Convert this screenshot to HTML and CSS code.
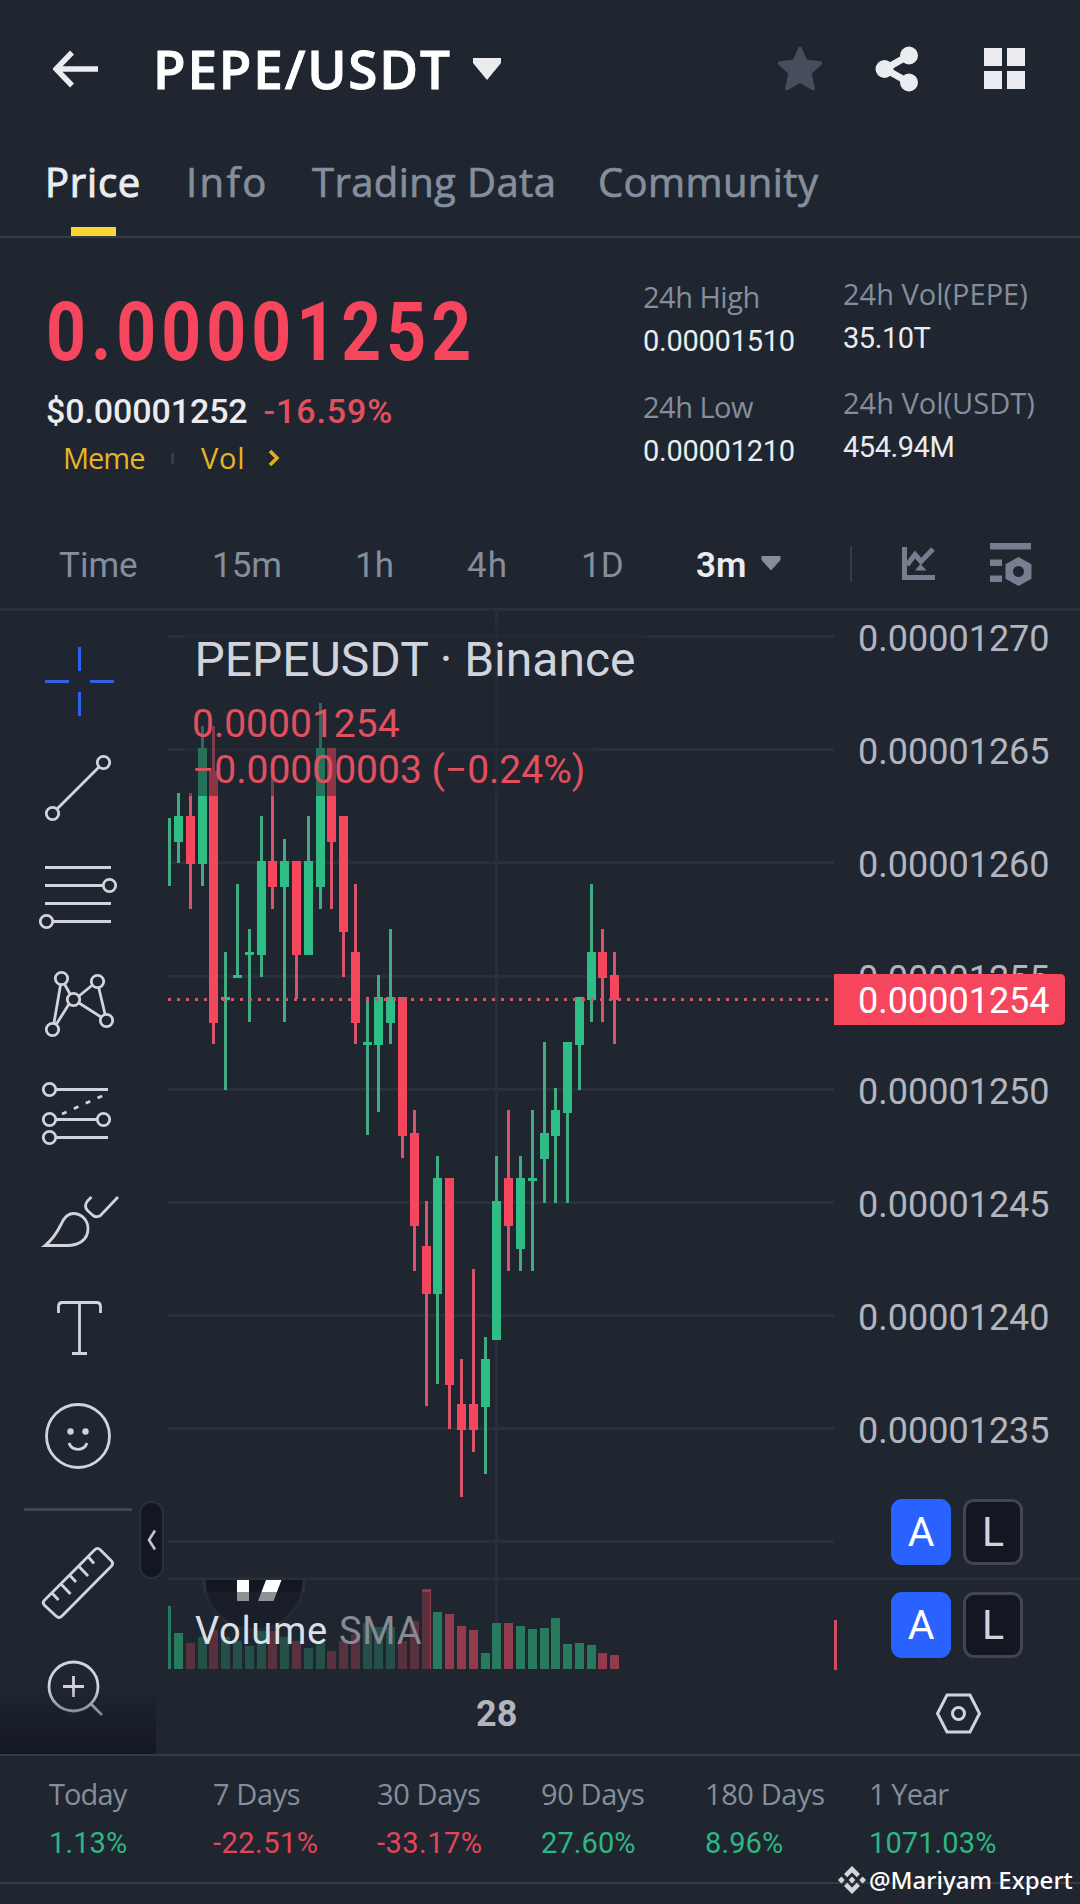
FILE: index.html
```html
<!DOCTYPE html>
<html lang="en">
<head>
<meta charset="utf-8">
<title>PEPE/USDT</title>
<link rel="stylesheet" href="styles.css">
</head>
<body>
<div class="app">
  <header class="header">
    <svg class="back" width="46" height="38" viewBox="0 0 46 38"><path d="M2 19H45M19 2.500 3 19l16 16.500" fill="none" stroke="#eaecef" stroke-width="5.500"/></svg>
    <h1 class="pair">PEPE/USDT</h1>
    <svg class="caret" width="28" height="22" viewBox="0 0 28 22"><path d="M0 0h28v5L14 22 0 5z" fill="#eaecef"/></svg>
    <div class="actions">
      <svg width="46" height="46" viewBox="0 0 46 46"><path d="M23 2.500l6 13 14.500 1.600-10.600 9.900 3.200 15.500L23 35.300 9.900 42.500l3.200-15.500L2.500 17.100 17 15.500z" fill="#474d5c" stroke="#474d5c" stroke-width="3.500" stroke-linejoin="round"/></svg>
      <svg class="share" width="44" height="46" viewBox="0 0 44 46"><path d="M33 10 10 23l23 13" fill="none" stroke="#eaecef" stroke-width="7"/><circle cx="34" cy="9.500" r="9" fill="#eaecef"/><circle cx="9.500" cy="23" r="9" fill="#eaecef"/><circle cx="34" cy="36.500" r="9" fill="#eaecef"/></svg>
      <svg class="grid-icon" width="41" height="41" viewBox="0 0 41 41"><path d="M0 0h18v18H0zM23 0h18v18H23zM0 23h18v18H0zM23 23h18v18H23z" fill="#eaecef"/></svg>
    </div>
  </header>

  <nav class="tabs">
    <a class="tab tab-active">Price</a>
    <a class="tab tab-info">Info</a>
    <a class="tab">Trading Data</a>
    <a class="tab">Community</a>
  </nav>

  <section class="summary">
    <div class="price-col">
      <div class="last-price">0.00001252</div>
      <div class="fiat"><span>$0.00001252</span><span class="fiat-change">-16.59%</span></div>
      <div class="tags">
        <span class="tag-meme">Meme</span><i class="tag-sep"></i><span class="tag-vol">Vol</span>
        <svg width="12" height="18" viewBox="0 0 12 18"><path d="M2 2l7 7-7 7" fill="none" stroke="#e0b01c" stroke-width="3.600"/></svg>
      </div>
    </div>
    <dl class="stats">
      <div><dt>24h High</dt><dd>0.00001510</dd></div>
      <div><dt>24h Low</dt><dd>0.00001210</dd></div>
    </dl>
    <dl class="stats stats-vol">
      <div><dt>24h Vol(PEPE)</dt><dd>35.10T</dd></div>
      <div><dt>24h Vol(USDT)</dt><dd>454.94M</dd></div>
    </dl>
  </section>

  <nav class="frames">
    <span>Time</span><span>15m</span><span>1h</span><span class="frame-4h">4h</span><span>1D</span>
    <span class="frame-on">3m<svg width="20" height="15" viewBox="0 0 20 15"><path d="M.5 0h19v4L10 14.500.5 4z" fill="#848e9c"/></svg></span>
    <i class="frame-sep"></i>
    <svg width="34" height="34" viewBox="0 0 34 34"><path d="M2.500 0V30.500H33" fill="none" stroke="#767e8f" stroke-width="5"/><path d="M5 18l8-10.500 6 7L31 2" fill="none" stroke="#767e8f" stroke-width="5"/><path d="M13 23.500l5.500-6.500 6 6.500z" fill="#767e8f"/></svg>
    <svg width="42" height="44" viewBox="0 0 42 44"><path d="M0 1h41v6.500H0zM0 17.500h12V24H0zM0 33.500h12V40H0z" fill="#767e8f"/><path fill-rule="evenodd" d="M28.500 15l13 7.300v14.400l-13 7.300-13-7.300V22.300zM28.500 24a5.500 5.500 0 1 0 0 11 5.500 5.500 0 0 0 0-11z" fill="#767e8f"/></svg>
  </nav>

  <main class="workspace">
    <aside class="tools">
      <svg class="tool" viewBox="0 627 168 108"><path d="M45 681.500h24M90 681.500h24M79.500 647v24M79.500 692v24" stroke="#2f62e6" stroke-width="3"/></svg>
      <svg class="tool" viewBox="0 735 168 108"><path d="M57 809l42-42"/><circle cx="103.500" cy="762.500" r="6.200"/><circle cx="52.500" cy="813.500" r="6.200"/></svg>
      <svg class="tool" viewBox="0 843 168 108"><path d="M45 867.500h66M45 885.500h58M45 903.500h66M53 921.500h58"/><circle cx="109.500" cy="885.500" r="6.200"/><circle cx="46.500" cy="921.500" r="6.200"/></svg>
      <svg class="tool" viewBox="0 951 168 108"><path d="M60.500 985 54 1023M64.500 984l5.500 10M69 1004l-12.500 20M79 996l13.500-11M79 1003l22 14M98.800 988l6.200 26"/><circle cx="61.500" cy="978.500" r="6.200"/><circle cx="97.500" cy="981.500" r="6.200"/><circle cx="73.500" cy="999.500" r="6.200"/><circle cx="52.500" cy="1029.500" r="6.200"/><circle cx="106.500" cy="1020.500" r="6.200"/></svg>
      <svg class="tool" viewBox="0 1059 168 108"><path d="M56 1089.500h52M56 1119.500h41M56 1137.500h52"/><path d="M62 1114l41-18.500" stroke-dasharray="5 8"/><circle cx="49.500" cy="1089.500" r="6.200"/><circle cx="49.500" cy="1119.500" r="6.200"/><circle cx="103.500" cy="1119.500" r="6.200"/><circle cx="49.500" cy="1137.500" r="6.200"/></svg>
      <svg class="tool" viewBox="0 1167 168 108"><path d="M45 1245.500c9-7 13-15 16-21 4-9 8-11 12-11 9 0 15 7 15 15 0 12-10 17-21 17z"/><path d="M91.500 1197l-4 4q-4 5 0 9.500l5.500 5q3.500 2.500 7.500 0L118 1197"/></svg>
      <svg class="tool" viewBox="0 1275 168 108"><path d="M58.500 1313v-6.500q0-4 4-4h34q4 0 4 4v6.500M79.500 1302.500v51M72 1353.500h15"/></svg>
      <svg class="tool" viewBox="0 1383 168 108"><circle cx="78" cy="1436" r="31.500"/><path d="M69 1443c3 8.500 15 8.500 18 0"/><circle class="dot" cx="70.500" cy="1431.500" r="3.200"/><circle class="dot" cx="85.500" cy="1431.500" r="3.200"/></svg>
      <i class="tool-divider"></i>
      <svg class="tool" viewBox="0 1529 168 108"><path d="M44.200 1600.500 95 1549.500q2.500-2.200 5 0l11.500 11.500q2.300 2.500 0 5L62 1616q-3 3-6 0l-11.800-11q-2-2.500 0-4.500zM52 1593l6.500 7M61 1584l9.500 10M69.500 1575l6.500 7M78.500 1566l9.500 10M88 1556.500l6 7"/></svg>
      <svg class="tool" viewBox="0 1637 168 108"><circle cx="73.500" cy="1686.500" r="24.500"/><path d="M63 1686.500h21M73.500 1676v21M91 1704l11 11"/></svg>
      <i class="tools-fade"></i>
      <button class="collapse"><svg width="10" height="22" viewBox="0 0 10 22"><path d="M8 1.500 2 11l6 9.500" fill="none" stroke="#c3c6cf" stroke-width="2.600"/></svg></button>
    </aside>
    <div class="chart">
      <svg class="plot" viewBox="168 611 912 1143">
        <g id="grid" fill="#29303a"></g>
        <g id="candles"></g>
        <g fill="#1f2630" fill-opacity=".5"><path d="M184 620h463v68H184zM184 688h410v108H184z"/></g>
        <path d="M168 999.500h666" stroke="#c9566a" stroke-width="3" stroke-dasharray="3 6"/>
        <g font-size="48" fill="#d1d4dc"><text x="194.500" y="676" textLength="441">PEPEUSDT · Binance</text></g>
        <g font-size="39" fill="#e2505f">
          <text x="192" y="736.500">0.00001254</text>
          <text x="192" y="782.500">−0.00000003 (−0.24%)</text>
        </g>
        <g id="axis" font-size="36" fill="#b2b5be"></g>
        <path d="M834 974h226q5 0 5 5v41q0 5-5 5H834z" fill="#f6465d"/>
        <text x="858" y="1013" font-size="36" fill="#fff">0.00001254</text>

        <path d="M204 1580a50 50 0 0 0 100 0z" fill="#131722"/>
        <path d="M204 1580a50 50 0 0 0 100 0" fill="none" stroke="#2b303b" stroke-width="3"/>
        <path d="M237 1580h12v21h-12zM266 1580h15.500l-8 21H258z" fill="#fff"/>
        <path d="M168 1577.500h912v2.500H168z" fill="#29303a"/>
        <g id="volume"></g>
        <path d="M184 1592h246v77H184z" fill="#1f2630" fill-opacity=".5"/>
        <text x="195" y="1643.500" font-size="38" letter-spacing=".690" fill="#dcdfe6">Volume</text>
        <text x="339" y="1643.500" font-size="38" letter-spacing=".800" fill="#868a94">SMA</text>
        <path d="M834 1620h3v50h-3z" fill="#d14c60"/>
        <text x="476" y="1726" font-size="36" font-weight="700" fill="#b2b5be">28</text>
        <g fill="none" stroke="#d1d4dc" stroke-width="3"><path d="M947 1695h23l9.500 18.500-9.500 18.500h-23l-9.500-18.500z"/><circle cx="958.500" cy="1713.500" r="6"/></g>
      </svg>
      <div class="scale scale-price"><button class="mode mode-on">A</button><button class="mode">L</button></div>
      <div class="scale scale-volume"><button class="mode mode-on">A</button><button class="mode">L</button></div>
    </div>
  </main>

  <footer class="periods">
    <div><span class="tight">Today</span><b class="up">1.13%</b></div>
    <div><span>7 Days</span><b class="down">-22.51%</b></div>
    <div><span>30 Days</span><b class="down">-33.17%</b></div>
    <div><span>90 Days</span><b class="up">27.60%</b></div>
    <div><span>180 Days</span><b class="up">8.96%</b></div>
    <div><span class="tight">1 Year</span><b class="up">1071.03%</b></div>
  </footer>
  <div class="credit">
    <svg width="28" height="28" viewBox="0 0 28 28"><g fill="#d4d5d8"><path d="M14 0l8 8-3.200 3.200L14 6.400l-4.800 4.800L6 8zM14 28l8-8-3.200-3.200-4.800 4.800-4.800-4.800L6 20zM14 10.600l3.400 3.400-3.400 3.400-3.400-3.400zM3.400 10.600 6.800 14l-3.400 3.400L0 14zM24.600 10.600 28 14l-3.400 3.400-3.400-3.400z"/></g></svg>
    <span>@Mariyam Expert</span>
  </div>
</div>
<script src="app.js"></script>
</body>
</html>
```
FILE: styles.css
```css
* { box-sizing: border-box; }
body { margin: 0; background: #1f2630; }
button { padding: 0; font: inherit; }
svg { display: block; flex: none; }

.app {
  position: relative;
  width: 1080px;
  height: 1904px;
  overflow: hidden;
  font-family: Roboto, "Open Sans", sans-serif;
  color: #eaecef;
  white-space: nowrap;
}

/* Header */
.header { display: flex; align-items: center; height: 137px; padding: 0 55px 0 53px; }
.pair {
  width: 298px;
  margin: 0 22px 0 54px;
  font: 600 53px/72px "Open Sans", sans-serif;
  letter-spacing: 1.83px;
  -webkit-text-stroke: .9px;
  color: #fff;
}
.actions { display: flex; align-items: center; margin-left: auto; }
.share { margin-left: 52px; }
.grid-icon { margin-left: 65px; }

/* Tabs */
.tabs {
  display: grid;
  grid-template-columns: 141px 126px 286px auto;
  height: 101px;
  padding-left: 45px;
  border-bottom: 2px solid #333b47;
  font: 500 40px/90px "Open Sans", sans-serif;
  letter-spacing: .4px;
  -webkit-text-stroke: .7px;
  color: #848e9c;
}
.tab { display: flex; flex-direction: column; }
.tab-info { letter-spacing: 2.4px; }
.tab-active { letter-spacing: .8px; -webkit-text-stroke: 1px; color: #eaecef; }
.tab-active::after {
  content: "";
  width: 45px;
  height: 9px;
  margin: auto 0 0 26px;
  background: #fcd535;
}

/* Price summary */
.summary { display: grid; grid-template-columns: 597px 200px auto; height: 286px; padding-left: 46px; }
.price-col { padding-top: 45px; }
.last-price {
  font-size: 82px;
  font-weight: 700;
  line-height: 98px;
  letter-spacing: 5.9px;
  transform: scaleX(.85);
  transform-origin: 0 50%;
  color: #f6465d;
}
.fiat { display: flex; gap: 16px; font-size: 34px; font-weight: 500; line-height: 61px; letter-spacing: -.1px; }
.fiat-change { letter-spacing: .9px; color: #e2505f; }
.tags { display: flex; align-items: center; margin-top: 1px; padding-left: 17px; font: 29px/30px "Open Sans", sans-serif; color: #e6b525; }
.tag-meme { width: 108px; letter-spacing: -1px; }
.tag-sep { width: 3px; height: 11px; background: #353d48; }
.tag-vol { width: 67px; margin-left: 27px; letter-spacing: .8px; }
.stats { display: flex; flex-direction: column; gap: 22px; margin: 0; padding-top: 37px; font-size: 29px; line-height: 44px; }
.stats dt { font-family: "Open Sans", sans-serif; letter-spacing: -.5px; color: #848e9c; }
.stats dd { margin: 0; letter-spacing: -.25px; }
.stats-vol { padding-top: 34px; gap: 21px; }
.stats-vol dt { letter-spacing: 0; }
.stats-vol dd { letter-spacing: -.45px; }

/* Timeframes */
.frames {
  display: grid;
  grid-template-columns: 153px 143px 112px 114px 115px 154px 52px 88px auto;
  align-items: center;
  height: 87px;
  padding-left: 59px;
  border-bottom: 3px solid #29303a;
  font-size: 35px;
  line-height: 84px;
  color: #848e9c;
}
.frames > svg { margin-top: -5px; }
.frame-4h { letter-spacing: 1px; }
.frame-on { display: flex; align-items: center; gap: 15px; font-weight: 600; color: #eaecef; }
.frame-on svg { margin-top: -5px; }
.frame-sep { width: 2px; height: 36px; margin-top: -5px; background: #333b47; }

/* Chart workspace */
.workspace { display: flex; height: 1143px; }
.tools { position: relative; width: 168px; padding-top: 16px; }
.tool { width: 168px; height: 108px; fill: none; stroke: #d1d4dc; stroke-width: 2.8; }
.tool .dot { fill: #d1d4dc; stroke: none; }
.tool-divider { display: block; width: 108px; height: 3px; margin: 17px 0 18px 24px; background: #434651; }
.tools-fade {
  position: absolute;
  left: 0;
  bottom: 0;
  width: 156px;
  height: 68px;
  background: linear-gradient(rgba(20, 24, 34, 0), #141822);
}
.collapse {
  position: absolute;
  left: 139px;
  top: 890px;
  display: flex;
  align-items: center;
  justify-content: center;
  width: 25px;
  height: 78px;
  border: 2px solid #2a303b;
  border-radius: 12px;
  background: #131722;
}
.chart { position: relative; width: 912px; }
.plot { width: 912px; height: 1143px; }
.scale { position: absolute; left: 723px; display: flex; gap: 12px; }
.scale-price { top: 888px; }
.scale-volume { top: 981px; }
.mode {
  width: 60px;
  height: 66px;
  border: 3px solid #434651;
  border-radius: 11px;
  background: #131722;
  font-size: 41px;
  line-height: 56px;
  color: #d1d4dc;
}
.mode-on { border-color: #2962ff; background: #2962ff; color: #fff; }

/* Performance by period */
.periods {
  display: grid;
  grid-template-columns: repeat(6, 164px);
  height: 130px;
  padding: 14px 0 0 49px;
  border-top: 2px solid #333b47;
  border-bottom: 2px solid #333b47;
  font-size: 29px;
}
.periods div { display: flex; flex-direction: column; line-height: 48px; }
.periods span { font-family: "Open Sans", sans-serif; letter-spacing: -.4px; color: #848e9c; }
.periods .tight { letter-spacing: -.9px; }
.periods b { font-weight: 400; line-height: 50px; letter-spacing: .1px; }
.periods .up { color: #2fb682; }
.periods .down { letter-spacing: .5px; color: #e2465a; }

.credit {
  position: absolute;
  left: 838px;
  top: 1862px;
  display: flex;
  align-items: center;
  gap: 3px;
  font: 500 24px/36px "Noto Sans", sans-serif;
  color: #fff;
}
```
FILE: app.js
```js
const UP = '#2ebd85', DOWN = '#f6465d';
const UP_WICK = '#41ac82', DOWN_WICK = '#d9536a';
const UP_VOLUME = '#287a5e', DOWN_VOLUME = '#913b4c';

// [wick x, high, body top, body bottom, low, rising, volume bar top]; prices in units of 1e-8
const bars = [
  [177, 1263, 1262, 1261, 1260, 1, 1633],
  [189, 1263, 1262, 1260, 1258, 0, 1643],
  [201, 1266, 1265, 1260, 1259, 1, 1637],
  [212, 1266, 1264, 1253, 1252, 0, 1630],
  [224, 1256, 1254, 1254, 1250, 1, 1637],
  [236, 1259, 1255, 1255, 1255, 1, 1641],
  [248, 1257, 1256, 1256, 1253, 1, 1646],
  [260, 1262, 1260, 1256, 1255, 1, 1631],
  [271, 1264, 1260, 1259, 1258, 0, 1631],
  [283, 1261, 1260, 1259, 1253, 1, 1637],
  [295, 1260, 1260, 1256, 1254, 0, 1641],
  [307, 1262, 1260, 1256, 1256, 1, 1648],
  [319, 1267, 1265, 1259, 1258, 1, 1643],
  [330, 1265, 1265, 1261, 1258, 0, 1651],
  [342, 1262, 1262, 1257, 1255, 0, 1641],
  [354, 1259, 1256, 1253, 1252, 0, 1634],
  [366, 1254, 1252, 1252, 1248, 1, 1623],
  [377, 1255, 1254, 1252, 1249, 1, 1627],
  [389, 1257, 1254, 1253, 1252, 1, 1627],
  [401, 1254, 1254, 1248, 1247, 0, 1641],
  [413, 1249, 1248, 1244, 1242, 0, 1621],
  [425, 1245, 1243, 1241, 1236, 0, 1589],
  [436, 1247, 1246, 1241, 1237, 1, 1612],
  [448, 1246, 1246, 1237, 1235, 0, 1614],
  [460, 1238, 1236, 1235, 1232, 0, 1626],
  [472, 1242, 1236, 1235, 1234, 0, 1630],
  [484, 1239, 1238, 1236, 1233, 1, 1653],
  [495, 1247, 1245, 1239, 1239, 1, 1623],
  [507, 1249, 1246, 1244, 1242, 0, 1623],
  [519, 1247, 1246, 1243, 1242, 1, 1626],
  [531, 1249, 1246, 1246, 1242, 1, 1629],
  [543, 1252, 1248, 1247, 1245, 1, 1628],
  [554, 1250, 1249, 1248, 1245, 1, 1618],
  [566, 1252, 1252, 1249, 1245, 1, 1644],
  [578, 1254, 1254, 1252, 1250, 1, 1643],
  [590, 1259, 1256, 1254, 1253, 1, 1645],
  [601, 1257, 1256, 1255, 1253, 0, 1653],
  [613, 1256, 1255, 1254, 1252, 0, 1655]
];

const priceY = p => Math.round(976.5 + (1255 - p) * 22.63);

function draw(parent, name, attrs, text) {
  const el = document.createElementNS('http://www.w3.org/2000/svg', name);
  for (const key in attrs) el.setAttribute(key, attrs[key]);
  if (text) el.textContent = text;
  document.getElementById(parent).append(el);
}

function rect(parent, x, y, width, height, fill) {
  draw(parent, 'rect', fill ? { x, y, width, height, fill } : { x, y, width, height });
}

for (let p = 1270; p >= 1230; p -= 5) {
  const y = priceY(p);
  rect('grid', 168, y - 2, 666, 3);
  if (p > 1230) draw('axis', 'text', { x: 858, y: y + 13.5 }, '0.0000' + p);
}
rect('grid', 495, 611, 3, 1058);

rect('candles', 168, priceY(1262), 3, priceY(1259) - priceY(1262), UP_WICK);
rect('volume', 168, 1606, 3, 63, UP_VOLUME);

for (const [x, high, top, bottom, low, rising, volume] of bars) {
  const bodyY = priceY(top) - 2;
  rect('candles', x, priceY(high) - 2, 3, priceY(low) - priceY(high) + 2, rising ? UP_WICK : DOWN_WICK);
  rect('candles', x - 3, bodyY, 9, priceY(bottom) - bodyY + 1, rising ? UP : DOWN);
  rect('volume', x - 3, volume, 9, 1669 - volume, rising ? UP_VOLUME : DOWN_VOLUME);
}
```
